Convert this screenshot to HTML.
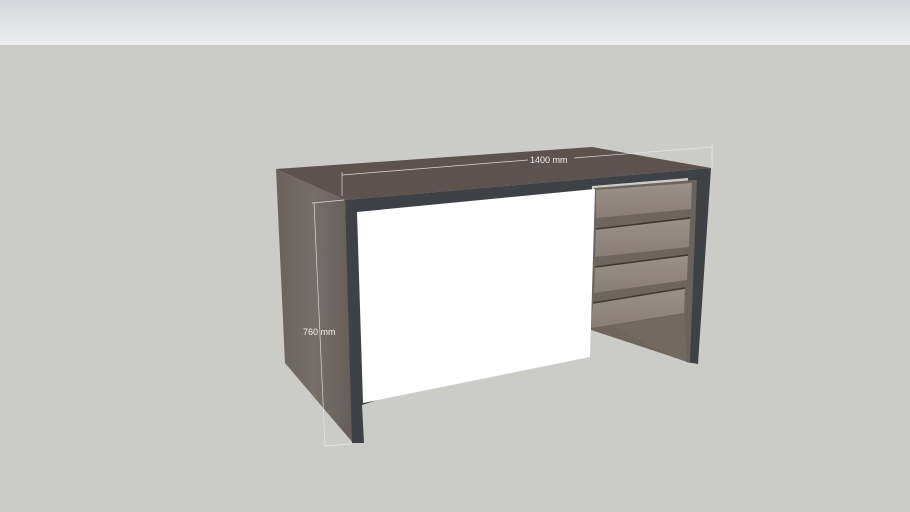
<!DOCTYPE html>
<html><head><meta charset="utf-8"><style>
html,body{margin:0;padding:0;width:910px;height:512px;overflow:hidden;background:#cbcbc8}
.top{position:absolute;left:0;top:0;width:910px;height:45px;background:linear-gradient(#d4d8dc,#eceeee)}
svg{position:absolute;left:0;top:0}
text{font-family:"Liberation Sans",sans-serif;font-size:9px;fill:#f4f4f4}
</style></head><body>
<div class="top"></div>
<svg width="910" height="512" viewBox="0 0 910 512">
<defs>
<linearGradient id="side" x1="0" x2="1"><stop offset="0" stop-color="#6a625c"/><stop offset="0.5" stop-color="#766e68"/><stop offset="1" stop-color="#655d57"/></linearGradient>
<linearGradient id="dr" x1="0" y1="0" x2="0" y2="1"><stop offset="0" stop-color="#9a9188"/><stop offset="1" stop-color="#887e75"/></linearGradient>
</defs>
<polygon points="276,169 592,147 711,168 345,200" fill="#5c534e"/>
<polygon points="276,169 345,200 353,443 285,363" fill="url(#side)"/>
<polygon points="345,200 711,168 698,364 686,362 688,178 592,186 589,330 362,405 364,443 352,443" fill="#3e4146"/>
<polygon points="594,188 694,180 688,362 670,356 591,330" fill="#6e655e"/>
<polygon points="689,181 697,180 690,362 685,360" fill="#6a625b"/>
<polygon points="596,190 692,183 691,209 596,218" fill="url(#dr)"/>
<polygon points="596,229 690,218 689,247 595,257" fill="url(#dr)"/>
<polygon points="595,267 688,255 687,280 594,293" fill="url(#dr)"/>
<polygon points="593,303 685,288 684,313 591,328" fill="url(#dr)"/>
<g stroke="#3d3530" stroke-width="1.5">
<line x1="596" y1="229" x2="690" y2="218"/>
<line x1="595" y1="267" x2="688" y2="255"/>
<line x1="593" y1="303" x2="685" y2="288"/>
</g>
<polygon points="612,326 684,314 687,362 670,356" fill="#72695f"/>
<polygon points="357,212 595,189 590,357 363,403" fill="#ffffff"/>
<g stroke="#e8e8e8" stroke-width="0.7" fill="none" opacity="0.9">
<line x1="342" y1="175" x2="528" y2="160"/>
<line x1="574" y1="158" x2="712" y2="147"/>
<line x1="342" y1="172" x2="342" y2="196"/>
<line x1="712" y1="144" x2="712" y2="168"/>
<line x1="314" y1="203" x2="325" y2="446"/>
<line x1="312" y1="203" x2="344" y2="200"/>
<line x1="324" y1="446" x2="352" y2="444"/>
</g>
<text x="530" y="163">1400 mm</text>
<text x="303" y="335">760 mm</text>
</svg>
</body></html>
